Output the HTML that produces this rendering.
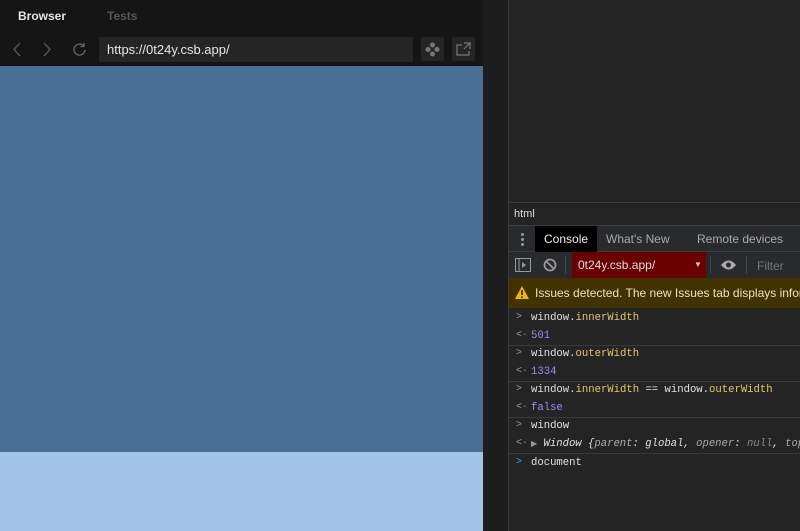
<!DOCTYPE html>
<html><head><style>
*{margin:0;padding:0;box-sizing:border-box}
body{width:800px;height:531px;overflow:hidden;background:#1f1f1f;font-family:"Liberation Sans",sans-serif;position:relative}
.a{position:absolute}
.mono{font-family:"Liberation Mono",monospace;font-size:10.6px}
.ln{position:absolute;left:509px;width:291px;height:18px;color:#e0e0e0}
.ln span.p{position:absolute;left:7px;top:3px;color:#999;font-size:10px}
.ln .t{position:absolute;left:22px;top:3px}
.y{color:#e8c66b}.v{color:#9c8bf0}
</style></head><body>
<div class="a" style="left:0;top:0;width:483px;height:66px;background:#151515"></div>
<div class="a" style="left:18px;top:9px;font-size:12px;font-weight:bold;color:#e6e6e6">Browser</div>
<div class="a" style="left:107px;top:9px;font-size:12px;font-weight:bold;color:#555">Tests</div>
<svg class="a" style="left:12px;top:42px" width="10" height="15" viewBox="0 0 10 15"><path d="M8 1L2 7.5 8 14" fill="none" stroke="#555" stroke-width="1.4"/></svg>
<svg class="a" style="left:42px;top:42px" width="10" height="15" viewBox="0 0 10 15"><path d="M2 1l6 6.5L2 14" fill="none" stroke="#555" stroke-width="1.4"/></svg>
<svg class="a" style="left:72px;top:42px" width="15" height="15" viewBox="0 0 15 15"><path d="M13 8a5.5 5.5 0 1 1-1.7-4.4M12 1v3.5H8.5" fill="none" stroke="#666" stroke-width="1.3"/></svg>
<div class="a" style="left:99px;top:37px;width:314px;height:25px;background:#252525;border-radius:2px"></div>
<div class="a" style="left:107px;top:42px;font-size:13px;color:#e6e6e6">https://0t24y.csb.app/</div>
<div class="a" style="left:421px;top:37px;width:23px;height:24px;background:#252525;border-radius:2px"></div>
<svg class="a" style="left:424px;top:41px" width="17" height="17" viewBox="0 0 17 17" fill="#777"><circle cx="8.5" cy="4" r="2.5"/><circle cx="4" cy="8.5" r="2.5"/><circle cx="13" cy="8.5" r="2.5"/><circle cx="8.5" cy="13" r="2.5"/></svg>
<div class="a" style="left:452px;top:37px;width:23px;height:24px;background:#252525;border-radius:2px"></div>
<svg class="a" style="left:456px;top:42px" width="15" height="14" viewBox="0 0 15 14"><path d="M8 1h6v6M14 1L8 7M6 3H1v10h12V9" fill="none" stroke="#777" stroke-width="1.2"/></svg>
<div class="a" style="left:0;top:66px;width:483px;height:386px;background:#4a6f94"></div>
<div class="a" style="left:0;top:452px;width:483px;height:79px;background:#a2c4e9"></div>
<div class="a" style="left:483px;top:0;width:25px;height:531px;background:#1d1d1d"></div>
<div class="a" style="left:508px;top:0;width:1px;height:531px;background:#3a3a3a"></div>
<div class="a" style="left:509px;top:0;width:291px;height:203px;background:#242424;border-bottom:1px solid #3d3d3d"></div>
<div class="a" style="left:509px;top:204px;width:291px;height:22px;background:#242424;border-bottom:1px solid #3d3d3d"></div>
<div class="a" style="left:514px;top:208px;font-size:11px;color:#ddd">html</div>
<div class="a" style="left:509px;top:226px;width:291px;height:26px;background:#292a2d;border-bottom:1px solid #3d3d3d"></div>
<div class="a" style="left:521px;top:233px;width:3px;height:3px;background:#999;border-radius:50%"></div>
<div class="a" style="left:521px;top:238px;width:3px;height:3px;background:#999;border-radius:50%"></div>
<div class="a" style="left:521px;top:243px;width:3px;height:3px;background:#999;border-radius:50%"></div>
<div class="a" style="left:535px;top:226px;width:62px;height:26px;background:#000"></div>
<div class="a" style="left:544px;top:232px;font-size:12px;color:#eee">Console</div>
<div class="a" style="left:606px;top:232px;font-size:12px;color:#aaa">What's New</div>
<div class="a" style="left:697px;top:232px;font-size:12px;color:#aaa">Remote devices</div>
<div class="a" style="left:509px;top:252px;width:291px;height:26px;background:#292a2d"></div>
<svg class="a" style="left:515px;top:258px" width="16" height="14" viewBox="0 0 16 14"><rect x="0.5" y="0.5" width="15" height="13" fill="none" stroke="#999"/><path d="M4 1v12" stroke="#999"/><path d="M7 4l4 3-4 3z" fill="#999"/></svg>
<svg class="a" style="left:543px;top:258px" width="14" height="14" viewBox="0 0 14 14"><circle cx="7" cy="7" r="5.5" fill="none" stroke="#999" stroke-width="1.8"/><path d="M3 3l8 8" stroke="#999" stroke-width="1.8"/></svg>
<div class="a" style="left:565px;top:256px;width:1px;height:18px;background:#444"></div>
<div class="a" style="left:572px;top:252px;width:134px;height:26px;background:#6b0000"></div>
<div class="a" style="left:578px;top:258px;font-size:12px;color:#ddd">0t24y.csb.app/</div>
<div class="a" style="left:694px;top:260px;font-size:8px;color:#ccc">▼</div>
<div class="a" style="left:710px;top:256px;width:1px;height:18px;background:#444"></div>
<svg class="a" style="left:720px;top:259px" width="17" height="12" viewBox="0 0 17 12"><path d="M1 6Q8.5-3 16 6Q8.5 15 1 6z" fill="#aaa"/><circle cx="8.5" cy="6" r="2.5" fill="#292a2d"/></svg>
<div class="a" style="left:746px;top:256px;width:1px;height:18px;background:#444"></div>
<div class="a" style="left:757px;top:259px;font-size:12px;color:#777">Filter</div>
<div class="a" style="left:509px;top:278px;width:291px;height:30px;background:#413200"></div>
<svg class="a" style="left:514px;top:285px" width="16" height="15" viewBox="0 0 16 15"><path d="M8 1L15 14H1z" fill="#f2b705"/><path d="M8 5v5M8 11.5v1.5" stroke="#222" stroke-width="1.6"/></svg>
<div class="a" style="left:535px;top:286px;font-size:12px;color:#ece3c0;white-space:nowrap">Issues detected. The new Issues tab displays inform</div>
<div class="a" style="left:509px;top:308px;width:291px;height:223px;background:#242424"></div>
<div class="ln mono" style="top:309px"><span class="p">&gt;</span><span class="t">window.<span class="y">innerWidth</span></span></div>
<div class="ln mono" style="top:327px"><span class="p">&lt;·</span><span class="t v">501</span></div>
<div class="a" style="left:509px;top:345px;width:291px;height:1px;background:#3a3a3a"></div>
<div class="ln mono" style="top:345px"><span class="p">&gt;</span><span class="t">window.<span class="y">outerWidth</span></span></div>
<div class="ln mono" style="top:363px"><span class="p">&lt;·</span><span class="t v">1334</span></div>
<div class="a" style="left:509px;top:381px;width:291px;height:1px;background:#3a3a3a"></div>
<div class="ln mono" style="top:381px"><span class="p">&gt;</span><span class="t">window.<span class="y">innerWidth</span> == window.<span class="y">outerWidth</span></span></div>
<div class="ln mono" style="top:399px"><span class="p">&lt;·</span><span class="t v">false</span></div>
<div class="a" style="left:509px;top:417px;width:291px;height:1px;background:#3a3a3a"></div>
<div class="ln mono" style="top:417px"><span class="p">&gt;</span><span class="t">window</span></div>
<div class="ln mono" style="top:435px;white-space:nowrap"><span class="p">&lt;·</span><span class="t"><span style="color:#999;font-size:8px">▶</span> <i>Window {<span style="color:#aaa">parent</span>: global, <span style="color:#aaa">opener</span>: <span style="color:#888">null</span>, <span style="color:#aaa">top</span></i></span></div>
<div class="a" style="left:509px;top:453px;width:291px;height:1px;background:#3a3a3a"></div>
<div class="ln mono" style="top:454px"><span class="p" style="color:#4a9af5">&gt;</span><span class="t">document</span></div>
</body></html>
